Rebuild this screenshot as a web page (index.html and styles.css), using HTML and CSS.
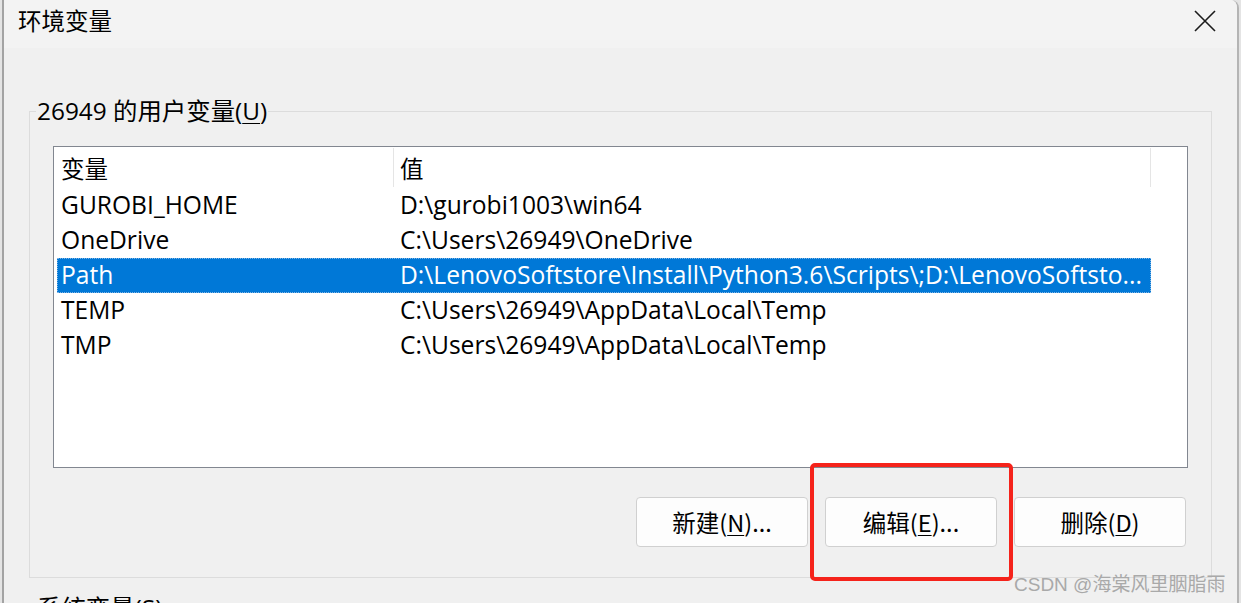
FILE: index.html
```html
<!DOCTYPE html>
<html lang="zh-CN">
<head>
    <meta charset="UTF-8">
    <meta name="viewport" content="width=device-width, initial-scale=1.0">
    <title>环境变量</title>
    <link rel="stylesheet" href="styles.css">
</head>
<body>

<div class="window">
    <div class="titlebar">
        <div class="title">环境变量</div>
        <button class="close-btn" aria-label="关闭">
            <svg width="22" height="22" viewBox="0 0 22 22">
                <path d="M1 1 L21 21 M21 1 L1 21" stroke="#1b1b1b" stroke-width="1.6" fill="none"/>
            </svg>
        </button>
    </div>

    <div class="content">
        <fieldset class="group">
            <legend>26949 的用户变量(<u>U</u>)</legend>

            <div class="listview">
                <div class="lv-header">
                    <div class="lv-hcol name">变量</div>
                    <div class="lv-hcol value">值</div>
                </div>
                <div class="lv-row"><div class="lv-col name">GUROBI_HOME</div><div class="lv-col value">D:\gurobi1003\win64</div></div>
                <div class="lv-row"><div class="lv-col name">OneDrive</div><div class="lv-col value">C:\Users\26949\OneDrive</div></div>
                <div class="lv-row selected"><div class="lv-col name">Path</div><div class="lv-col value">D:\LenovoSoftstore\Install\Python3.6\Scripts\;D:\LenovoSoftsto...</div></div>
                <div class="lv-row"><div class="lv-col name">TEMP</div><div class="lv-col value">C:\Users\26949\AppData\Local\Temp</div></div>
                <div class="lv-row"><div class="lv-col name">TMP</div><div class="lv-col value">C:\Users\26949\AppData\Local\Temp</div></div>
            </div>

            <div class="btn-row">
                <button class="btn">新建(<u>N</u>)...</button>
                <button class="btn">编辑(<u>E</u>)...</button>
                <button class="btn">删除(<u>D</u>)</button>
            </div>
        </fieldset>

        <fieldset class="group second">
            <legend>系统变量(<u>S</u>)</legend>
        </fieldset>
    </div>

    <div class="highlight"></div>
    <div class="watermark">CSDN @海棠风里胭脂雨</div>
</div>

</body>
</html>
```

FILE: styles.css
```css
* { margin: 0; padding: 0; box-sizing: border-box; }
html, body { height: 100%; }
body {
    background: #e4e4e4;
    font-family: "Open Sans", "Noto Sans CJK SC", sans-serif;
    color: #000;
    overflow: hidden;
}
u { text-decoration-thickness: 1px; text-underline-offset: 3px; }

.window {
    position: relative;
    margin-left: 2px;
    width: 1237px;
    height: 603px;
    background: #f0f0f0;
    border-left: 2px solid #a3a3a3;
    border-right: 2px solid #b4b4b4;
    border-top-right-radius: 8px;
    overflow: hidden;
}

.titlebar {
    display: flex;
    justify-content: space-between;
    align-items: flex-start;
    height: 48px;
    padding: 4px 21px 0 14px;
    background: #f3f3f3;
}
.title {
    font-family: "Noto Sans CJK SC", sans-serif;
    font-size: 23.5px;
    line-height: 32px;
}
.close-btn {
    background: none;
    border: none;
    margin-top: 6px;
    width: 22px;
    height: 22px;
}
.close-btn svg { display: block; }

.content { padding: 0 0 0 25px; }

.group {
    width: 1183px;
    margin-top: 48px;
    padding: 20px 0 30px 6px;
    border: 1px solid #dcdcdc;
    min-width: 0;
}
.group legend {
    padding: 0 1px;
    font-size: 24.4px;
    line-height: 30px;
}
.group.second {
    margin-top: 15px;
    height: 80px;
}

.listview {
    margin-left: 17px;
    width: 1135px;
    height: 322px;
    background: #fff;
    border: 1px solid #828790;
    font-size: 24.6px;
}
.lv-header {
    display: flex;
    height: 41px;
    align-items: stretch;
}
.lv-hcol {
    display: flex;
    align-items: center;
    font-family: "Noto Sans CJK SC", sans-serif;
    font-size: 23.5px;
}
.lv-hcol.name { width: 339px; padding-left: 7px; }
.lv-hcol.value {
    width: 758px;
    padding-left: 6px;
    border-left: 1px solid #e5e5e5;
    border-right: 1px solid #e5e5e5;
    margin: 1px 0 1px;
}

.lv-row {
    display: flex;
    height: 35px;
    padding-bottom: 3px;
    margin-left: 3px;
    width: 1094px;
    align-items: center;
    white-space: nowrap;
}
.lv-col { overflow: hidden; }
.lv-col.name { width: 336px; padding-left: 4px; }
.lv-col.value { width: 758px; padding-left: 7px; }
.lv-row.selected {
    background: #0078d7;
    color: #fff;
    outline: 1px dotted #7fb4e4;
    outline-offset: -1px;
}

.btn-row {
    display: flex;
    justify-content: flex-end;
    gap: 17px;
    width: 1133px;
    margin: 29px 0 0 17px;
}
.btn {
    width: 172px;
    height: 50px;
    background: #fdfdfd;
    border: 1px solid #d0d0d0;
    border-radius: 4px;
    font-family: "Noto Sans CJK SC", sans-serif;
    font-size: 23.5px;
    color: #000;
}

.highlight {
    position: absolute;
    left: 806px;
    top: 463px;
    width: 203px;
    height: 118px;
    border: 4px solid #f5231b;
    border-radius: 5px;
}
.watermark {
    position: absolute;
    left: 1010px;
    top: 569px;
    font-family: "Liberation Sans", "Noto Sans CJK SC", sans-serif;
    font-size: 19px;
    color: #a9a9a9;
    white-space: nowrap;
}
```
